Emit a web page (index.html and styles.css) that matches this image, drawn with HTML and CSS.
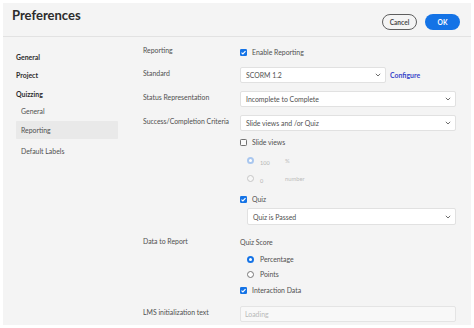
FILE: index.html
```html
<!DOCTYPE html>
<html lang="en">
<head>
<meta charset="utf-8">
<title>Preferences</title>
<link rel="stylesheet" href="styles.css">
</head>
<body>
<div class="dialog">
  <header class="head">
    <h1 class="title">Preferences</h1>
    <div class="actions">
      <button class="btn btn-secondary">Cancel</button>
      <button class="btn btn-primary">OK</button>
    </div>
  </header>
  <div class="body">
    <nav class="nav">
      <div class="nav-top">General</div>
      <div class="nav-top">Project</div>
      <div class="nav-top">Quizzing</div>
      <div class="nav-sub first">General</div>
      <div class="nav-sub selected">Reporting</div>
      <div class="nav-sub last">Default Labels</div>
    </nav>
    <main class="form">
      <div class="row r1">
        <div class="label">Reporting</div>
        <div class="controls">
          <div class="check tall"><span class="box on"><svg viewBox="0 0 8 8" width="7" height="7"><path d="M1.7 4.1 L3.3 5.7 L6.3 2.3" fill="none" stroke="#fff" stroke-width="1.3"/></svg></span>Enable Reporting</div>
        </div>
      </div>
      <div class="row r2">
        <div class="label">Standard</div>
        <div class="controls">
          <div class="inline">
            <div class="select short"><span>SCORM 1.2</span><svg class="chev" viewBox="0 0 6 4" width="6" height="4"><polyline points="0.8,0.8 3,3 5.2,0.8" fill="none" stroke="#6e6e6e" stroke-width="1"/></svg></div>
            <a class="link">Configure</a>
          </div>
        </div>
      </div>
      <div class="row r3">
        <div class="label">Status Representation</div>
        <div class="controls">
          <div class="select"><span>Incomplete to Complete</span><svg class="chev" viewBox="0 0 6 4" width="6" height="4"><polyline points="0.8,0.8 3,3 5.2,0.8" fill="none" stroke="#6e6e6e" stroke-width="1"/></svg></div>
        </div>
      </div>
      <div class="row r4">
        <div class="label">Success/Completion Criteria</div>
        <div class="controls">
          <div class="select"><span>Slide views and /or Quiz</span><svg class="chev" viewBox="0 0 6 4" width="6" height="4"><polyline points="0.8,0.8 3,3 5.2,0.8" fill="none" stroke="#6e6e6e" stroke-width="1"/></svg></div>
          <div class="check m4"><span class="box off"></span>Slide views</div>
          <div class="radio m4 disabled"><span class="dot sel-dis"></span><span class="num">100</span><span class="unit">%</span></div>
          <div class="radio m4 disabled"><span class="dot off-dis"></span><span class="num">0</span><span class="unit">number</span></div>
          <div class="check m7"><span class="box on"><svg viewBox="0 0 8 8" width="7" height="7"><path d="M1.7 4.1 L3.3 5.7 L6.3 2.3" fill="none" stroke="#fff" stroke-width="1.3"/></svg></span>Quiz</div>
          <div class="select indent m2"><span>Quiz is Passed</span><svg class="chev" viewBox="0 0 6 4" width="6" height="4"><polyline points="0.8,0.8 3,3 5.2,0.8" fill="none" stroke="#6e6e6e" stroke-width="1"/></svg></div>
        </div>
      </div>
      <div class="row r5">
        <div class="label">Data to Report</div>
        <div class="controls">
          <div class="text-line">Quiz Score</div>
          <div class="radio m3"><span class="dot sel"></span><span class="rlabel">Percentage</span></div>
          <div class="radio m1"><span class="dot off"></span><span class="rlabel">Points</span></div>
          <div class="check m2"><span class="box on"><svg viewBox="0 0 8 8" width="7" height="7"><path d="M1.7 4.1 L3.3 5.7 L6.3 2.3" fill="none" stroke="#fff" stroke-width="1.3"/></svg></span>Interaction Data</div>
        </div>
      </div>
      <div class="row r6">
        <div class="label">LMS initialization text</div>
        <div class="controls">
          <input class="textfield" type="text" placeholder="Loading">
        </div>
      </div>
    </main>
  </div>
</div>
</body>
</html>
```

FILE: styles.css
```css
html, body {
  margin: 0;
  padding: 0;
  background: #ffffff;
}
body {
  font-family: Lato, "Open Sans", sans-serif;
  font-size: 6.9px;
  color: #505050;
}
.dialog {
  margin: 3px 3px 0 3px;
  height: 322px;
  background: #f4f4f4;
  box-sizing: border-box;
}
.head {
  height: 34px;
  box-sizing: border-box;
  border-bottom: 1px solid #e2e2e2;
  display: flex;
  justify-content: space-between;
  align-items: flex-start;
  padding: 0 11px 0 9px;
}
.title {
  margin: 5.5px 0 0 0;
  font-size: 13px;
  line-height: 13px;
  font-weight: 700;
  color: #2c2c2c;
}
.actions {
  display: flex;
  gap: 8px;
  margin-top: 11px;
}
.btn {
  width: 35px;
  height: 16px;
  border-radius: 8px;
  font-family: Lato, "Open Sans", sans-serif;
  font-size: 6.6px;
  font-weight: 700;
  padding: 0;
  box-sizing: border-box;
  line-height: 1;
}
.btn-secondary {
  background: transparent;
  border: 1.3px solid #5e5e5e;
  color: #4b4b4b;
}
.btn-primary {
  background: #1473e6;
  border: none;
  color: #ffffff;
}
.body {
  display: flex;
  padding-left: 13px;
}
.nav {
  width: 102px;
  padding-top: 10.5px;
}
.nav-top {
  height: 18.5px;
  line-height: 18.5px;
  font-weight: 700;
  color: #2c2c2c;
}
.nav-sub {
  padding-left: 5px;
  color: #505050;
  height: 18px;
  line-height: 18px;
}
.nav-sub.first {
  height: 16px;
  line-height: 16px;
}
.nav-sub.selected {
  margin-top: 2px;
  background: #e9e9e9;
  border-radius: 1px;
}
.nav-sub.last {
  margin-top: 3px;
}
.form {
  margin-left: 25px;
  padding-top: 7px;
}
.row {
  display: grid;
  grid-template-columns: 97px 216px;
}
.r2 { margin-top: 7px; }
.r3, .r4 { margin-top: 8px; }
.r5 { margin-top: 10px; }
.r6 { margin-top: 9px; }
.label {
  line-height: 13px;
  color: #505050;
}
.controls {
  display: flex;
  flex-direction: column;
}
.check, .radio, .text-line {
  height: 14px;
  display: flex;
  align-items: center;
}
.check.tall { height: 16px; }
.m1 { margin-top: 1px; }
.m2 { margin-top: 2px; }
.m3 { margin-top: 3px; }
.m4 { margin-top: 4px; }
.m7 { margin-top: 7px; }
.box {
  width: 7px;
  height: 7px;
  box-sizing: border-box;
  border-radius: 1.3px;
  margin-right: 5px;
  display: flex;
  align-items: center;
  justify-content: center;
  flex: none;
}
.box.on {
  background: #1473e6;
}
.box.off {
  border: 1px solid #707070;
  background: #fafafa;
}
.box svg { display: block; }
.inline {
  display: flex;
  align-items: center;
}
.select {
  height: 16px;
  box-sizing: border-box;
  background: #ffffff;
  border: 1px solid #e1e1e1;
  border-radius: 2px;
  display: flex;
  align-items: center;
  justify-content: space-between;
  padding: 0 4px 0 5px;
  color: #505050;
}
.select.short { width: 146px; }
.select.indent {
  margin-left: 7px;
  height: 17px;
}
.chev { display: block; flex: none; }
.link {
  margin-left: 4px;
  font-weight: 700;
  color: #3745c9;
}
.radio { padding-left: 7px; }
.dot {
  width: 7px;
  height: 7px;
  border-radius: 50%;
  box-sizing: border-box;
  flex: none;
  background: #ffffff;
}
.dot.sel { border: 2.3px solid #1473e6; }
.dot.off { border: 1px solid #777777; }
.dot.sel-dis { border: 2.3px solid #a9c7ef; }
.dot.off-dis { border: 1px solid #c6c6c6; background: #f7f7f7; }
.rlabel { margin-left: 6px; }
.num {
  margin-left: 6px;
  width: 25px;
  font-size: 5.6px;
  padding-top: 4px;
  color: #b4b4b4;
}
.unit {
  font-size: 5.8px;
  color: #bcbcbc;
}
.textfield {
  height: 16px;
  box-sizing: border-box;
  width: 216px;
  margin: 0;
  border: 1px solid #e4e4e4;
  border-radius: 2px;
  background: #f8f8f8;
  font-family: Lato, "Open Sans", sans-serif;
  font-size: 6.9px;
  padding: 0 4px;
  color: #505050;
  outline: none;
}
.textfield::placeholder { color: #b8b8b8; }
```
